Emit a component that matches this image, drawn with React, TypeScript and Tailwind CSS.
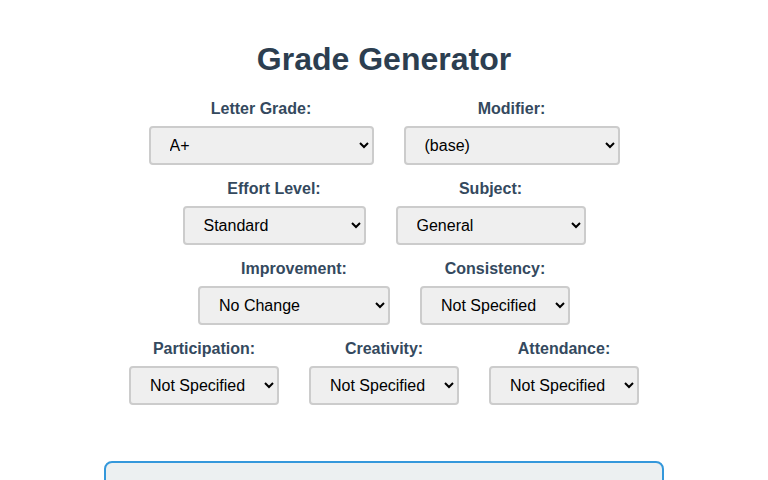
import React from "react";

type Field = { label: string; value: string; options: string[]; w: string };

const rows: Field[][] = [
  [
    { label: "Letter Grade:", value: "A+", options: ["A+", "A", "B", "C", "D", "F"], w: "w-[225px]" },
    { label: "Modifier:", value: "(base)", options: ["(base)", "+", "-"], w: "w-[216px]" },
  ],
  [
    { label: "Effort Level:", value: "Standard", options: ["Standard", "High", "Low"], w: "w-[183px]" },
    { label: "Subject:", value: "General", options: ["General", "Math", "Science"], w: "w-[190px]" },
  ],
  [
    { label: "Improvement:", value: "No Change", options: ["No Change", "Improved", "Declined"], w: "w-[192px]" },
    { label: "Consistency:", value: "Not Specified", options: ["Not Specified"], w: "w-[150px]" },
  ],
  [
    { label: "Participation:", value: "Not Specified", options: ["Not Specified"], w: "w-[150px]" },
    { label: "Creativity:", value: "Not Specified", options: ["Not Specified"], w: "w-[150px]" },
    { label: "Attendance:", value: "Not Specified", options: ["Not Specified"], w: "w-[150px]" },
  ],
];

export default function App() {
  return (
    <div className="min-h-screen bg-white font-['Liberation_Sans',Arial,sans-serif] text-[#2c3e50]">
      <div className="flex flex-col items-center pt-[41px]">
        <h1 className="text-[32px] leading-[37px] font-bold text-[#2c3e50] mb-[22px]">Grade Generator</h1>
        {rows.map((row, i) => (
          <div key={i} className="flex justify-center gap-[30px]">
            {row.map((f) => (
              <div key={f.label} className="flex flex-col items-center mb-[15px]">
                <label className="text-base leading-[18px] font-bold text-[#34495e] mb-[8px]">{f.label}</label>
                <select
                  defaultValue={f.value}
                  className={`${f.w} h-[39px] py-2 pl-[15px] pr-2 text-base text-black bg-[#efefef] border-2 border-[#cccccc] rounded-[4px]`}
                >
                  {f.options.map((o) => (
                    <option key={o}>{o}</option>
                  ))}
                </select>
              </div>
            ))}
          </div>
        ))}
        <div className="mt-[41px] w-[560px] h-[100px] bg-[#ecf0f1] border-2 border-[#3498db] rounded-[8px]" />
      </div>
    </div>
  );
}
